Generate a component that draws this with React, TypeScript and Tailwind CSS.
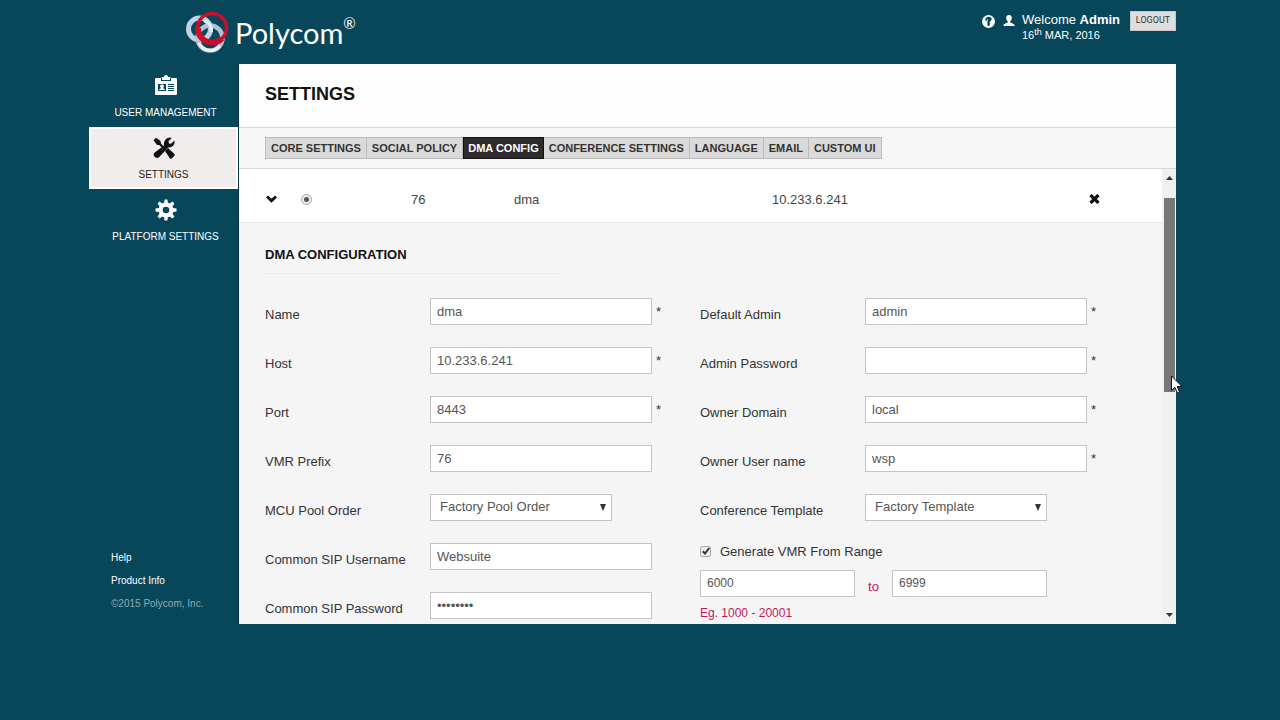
import { useState } from "react";
import type { ReactNode } from "react";

const tabs = [
  "CORE SETTINGS",
  "SOCIAL POLICY",
  "DMA CONFIG",
  "CONFERENCE SETTINGS",
  "LANGUAGE",
  "EMAIL",
  "CUSTOM UI",
];

const inputClass = "h-[27px] border border-[#c4c4c4] bg-white px-[6px] text-[#555] outline-none";

function Logo() {
  return (
    <a href="#" className="flex items-center" aria-label="Polycom home">
      <svg width="46" height="44" viewBox="0 0 46 44" fill="none">
        <circle cx="14.500" cy="18" r="11" stroke="#c3d3e6" strokeWidth="5" />
        <circle cx="25" cy="27" r="12.500" stroke="#b4c2d6" strokeWidth="4.500" />
        <path d="M14 32a12.500 12.500 0 0 0 21 3" stroke="#eef3f8" strokeWidth="3" />
        <circle cx="27" cy="17" r="14.500" stroke="#c8102e" strokeWidth="3.500" />
        <path d="M13 17c0 8 6 14.500 14 14.500 4 0 7-1 10-4" stroke="#c8102e" strokeWidth="6" />
        <path d="M19.500 10c4.500 1.500 7.500 5 7 11" stroke="#e6eef6" strokeWidth="3" />
      </svg>
      <span className="flex items-start pl-1 font-['Lato',sans-serif] text-[29px] leading-9 text-white">
        Polycom
        <span className="text-[15px] leading-4">®</span>
      </span>
    </a>
  );
}

function BadgeIcon() {
  return (
    <svg width="22" height="20" viewBox="0 0 22 20">
      <path fill="#fff" d="M1 3h5.500V2H9a2 2 0 0 1 4 0h2.500v1H21a1 1 0 0 1 1 1v15a1 1 0 0 1-1 1H1a1 1 0 0 1-1-1V4a1 1 0 0 1 1-1z" />
      <path fill="#08465a" d="M6 3h1v2h8V3h1v3H6zM3 9h8v7H3zM13 9h6v1h-6zM13 11h6v1h-6zM13 13h6v1h-6zM13 15h6v1h-6z" />
      <path fill="#fff" d="M7 9.500a1.700 1.700 0 0 1 1 3.200c0 .8 2 .8 2 2.300H4c0-1.500 2-1.500 2-2.300a1.700 1.700 0 0 1 1-3.200z" />
    </svg>
  );
}

function ToolsIcon() {
  return (
    <svg width="22" height="22" viewBox="0 0 22 22">
      <path fill="#111" d="M.5 3.200L3 .8 7.500 4l.6 2.700 3.200 3.200-1.600 1.600-3.200-3.200-2.700-.6z" />
      <path fill="#111" d="M12 14l3-3 6.200 5.800c.7.700.7 1.500 0 2.200l-2.200 2.200c-.7.700-1.500.7-2.200 0z" />
      <path
        fill="#111"
        d="M11 8.500c-.6-4 2-8 6-8l1.800.4-3.300 3.300.4 2.200 2.200.4 3.300-3.200c1 4-2.200 7.400-6.200 6.900L6 20.300c-1 1-2.700 1-3.800 0l-.8-.8c-1-1.100-1-2.700 0-3.800z"
      />
    </svg>
  );
}

function GearIcon() {
  return (
    <svg width="22" height="22" viewBox="0 0 22 22">
      <g fill="#fff">
        {[0, 45, 90, 135].map((angle) => (
          <path key={angle} transform={`rotate(${angle} 11 11)`} d="M9.600 .5h2.800l.8 5v11l-.8 5H9.600l-.8-5v-11z" />
        ))}
        <circle cx="11" cy="11" r="7.500" />
      </g>
      <circle cx="11" cy="11" r="3.300" fill="#08465a" />
    </svg>
  );
}

function NavItem({ icon, label, active }: { icon: ReactNode; label: string; active?: boolean }) {
  return (
    <a
      href="#"
      className={
        active
          ? "flex h-[62px] flex-col items-center justify-between border-2 border-white bg-[#f1edec] pt-2 pb-1 text-[10px] leading-4 text-[#222]"
          : "flex h-[62px] flex-col items-center justify-between pt-[10px] pb-[6px] pl-1 text-[10px] leading-4 text-white"
      }
    >
      {icon}
      <span>{label}</span>
    </a>
  );
}

type FieldProps = { id: string; label: string; value: string; required?: boolean; type?: string };

function Field({ id, label, value, required, type = "text" }: FieldProps) {
  return (
    <div className="flex h-[49px] items-start">
      <label htmlFor={id} className="w-[165px] shrink-0 pt-[7px] leading-5">
        {label}
      </label>
      <input id={id} type={type} defaultValue={value} className={`${inputClass} w-[222px]`} />
      {required && <span className="pl-1 leading-7">*</span>}
    </div>
  );
}

function SelectField({ id, label, value }: { id: string; label: string; value: string }) {
  return (
    <div className="flex h-[49px] items-start">
      <label htmlFor={id} className="w-[165px] shrink-0 pt-[7px] leading-5">
        {label}
      </label>
      <div className="relative">
        <select
          id={id}
          defaultValue={value}
          className="h-[27px] w-[182px] appearance-none border border-[#c4c4c4] bg-white px-[9px] text-[#555] outline-none"
        >
          <option>{value}</option>
        </select>
        <svg className="pointer-events-none absolute top-[10px] right-[6px]" width="6" height="7" viewBox="0 0 6 7">
          <path fill="#333" d="M0 0h6L3 7z" />
        </svg>
      </div>
    </div>
  );
}

function DmaTable() {
  return (
    <table className="w-full table-fixed border-b border-[#e6e6e6] bg-white text-[13px] text-[#444]">
      <colgroup>
        <col className="w-[57px]" />
        <col className="w-[115px]" />
        <col className="w-[103px]" />
        <col className="w-[258px]" />
        <col />
        <col className="w-[73px]" />
      </colgroup>
      <tbody>
        <tr className="h-[53px]">
          <td className="pt-2 pl-[27px]">
            <button aria-label="Collapse" className="block">
              <svg width="11" height="8" viewBox="0 0 11 8">
                <path fill="none" stroke="#111" strokeWidth="3" d="M1 1.500l4.500 4.300L10 1.500" />
              </svg>
            </button>
          </td>
          <td className="pt-2 pl-1">
            <input
              type="radio"
              name="dma"
              defaultChecked
              aria-label="Select dma"
              className="m-px block size-[11px] appearance-none rounded-full border border-[#aaa] bg-[#eee] checked:bg-[radial-gradient(circle,#555_0,#555_2px,#eee_3px)]"
            />
          </td>
          <td className="pt-2">76</td>
          <td className="pt-2">dma</td>
          <td className="pt-2">10.233.6.241</td>
          <td className="pt-2">
            <button aria-label="Delete" className="block">
              <svg width="11" height="10" viewBox="0 0 11 10">
                <path fill="none" stroke="#111" strokeWidth="3.200" d="M1.500 1l8 8M9.500 1l-8 8" />
              </svg>
            </button>
          </td>
        </tr>
      </tbody>
    </table>
  );
}

function Scrollbar() {
  return (
    <div className="relative flex w-[14px] shrink-0 flex-col items-center bg-[#f0f0f0] pt-[7px] pb-[7px]">
      <svg width="7" height="4" viewBox="0 0 7 4">
        <path fill="#333" d="M0 4h7L3.500 0z" />
      </svg>
      <div className="mt-[18px] h-[194px] w-[11px] bg-[#777]" />
      <svg className="mt-auto" width="7" height="4" viewBox="0 0 7 4">
        <path fill="#333" d="M0 0h7L3.500 4z" />
      </svg>
      <svg className="absolute top-[206px] left-[9px]" width="12" height="20" viewBox="0 0 12 20">
        <path fill="#fff" stroke="#111" d="M.5 1v14.500l3.400-3.200 2.400 5.900 2.300-1-2.400-5.700h4.800z" />
      </svg>
    </div>
  );
}

export default function App() {
  const [activeTab, setActiveTab] = useState("DMA CONFIG");

  return (
    <div className="flex h-screen flex-col bg-[#08465a] pr-[104px] pb-24 pl-[89px] font-['Liberation_Sans',Arial,sans-serif]">
      <header className="flex h-16 shrink-0 items-start justify-between pt-[11px] pl-24">
        <Logo />
        <div className="flex items-start text-white">
          <a href="#" aria-label="Help" className="pt-1">
            <svg width="13" height="13" viewBox="0 0 12 12">
              <circle cx="6" cy="6" r="6" fill="#fff" />
              <path fill="#08465a" d="M6 1.700c2 0 3 1 3 2.300C9 5.300 7.200 5.500 7.200 6.500V10H5V5.300h.6V4.200H4.500v1H3C3 3 4 1.700 6 1.700z" />
            </svg>
          </a>
          <svg className="mt-1 ml-2" width="12" height="12" viewBox="0 0 11 12">
            <path fill="#fff" d="M5.500 0C7.300 0 8.300 1.300 8.300 3S7.500 5.500 6.800 6.300c-.3 1 .2 1.400 1.200 1.800 1.500.6 3 1 3 2.400v.5H0v-.5c0-1.400 1.500-1.800 3-2.400 1-.4 1.500-.8 1.200-1.800C3.500 5.500 2.700 4.700 2.700 3s1-3 2.800-3z" />
          </svg>
          <div className="w-[115px] pt-px pl-[7px]">
            <p className="text-[13px] leading-4">
              Welcome <strong>Admin</strong>
            </p>
            <p className="text-[11px] leading-[14px]">
              16<sup className="text-[9px] leading-none">th</sup> MAR, 2016
            </p>
          </div>
          <button className="h-5 w-[46px] border border-[#c9c9c9] bg-[#dedede] font-['Roboto',sans-serif] text-[9px] text-[#333]">
            LOGOUT
          </button>
        </div>
      </header>

      <div className="flex min-h-0 flex-1">
        <aside className="flex w-[149px] shrink-0 flex-col">
          <nav className="pt-px">
            <NavItem icon={<BadgeIcon />} label="USER MANAGEMENT" />
            <NavItem icon={<ToolsIcon />} label="SETTINGS" active />
            <NavItem icon={<GearIcon />} label="PLATFORM SETTINGS" />
          </nav>
          <ul className="mt-auto pb-3 pl-[22px] text-[10px] leading-4 text-white">
            <li className="mb-[7px]">
              <a href="#">Help</a>
            </li>
            <li className="mb-[7px]">
              <a href="#">Product Info</a>
            </li>
            <li className="text-[#8fa9b8]">©2015 Polycom, Inc.</li>
          </ul>
        </aside>

        <main className="flex min-w-0 flex-1 flex-col border-l border-[#083243] bg-[#f5f5f5]">
          <h1 className="h-[63px] shrink-0 bg-[#fdfdfd] pl-[26px] text-[18px] leading-[61px] font-bold text-[#111]">
            SETTINGS
          </h1>
          <div className="flex h-[42px] shrink-0 items-center border-y border-[#d9d9d9] bg-[#f7f7f7] pl-[26px]">
            <div className="flex border-l border-[#bbb]">
              {tabs.map((tab) => (
                <button
                  key={tab}
                  onClick={() => setActiveTab(tab)}
                  className={
                    tab === activeTab
                      ? "h-[22px] border border-[#111] bg-[#2d2b2d] px-1 text-[11px] font-bold text-white"
                      : "h-[22px] border-y border-r border-[#bbb] bg-[#dadada] px-[5px] text-[11px] font-bold text-[#333]"
                  }
                >
                  {tab}
                </button>
              ))}
            </div>
          </div>

          <div className="flex min-h-0 flex-1">
            <div className="min-w-0 flex-1 overflow-hidden">
              <DmaTable />
              <form className="pr-[27px] pl-[26px] text-[13px] text-[#333]">
                <h2 className="mb-6 w-[295px] border-b border-[#ececec] pt-[22px] pb-2 leading-5 font-bold text-[#111]">
                  DMA CONFIGURATION
                </h2>
                <div className="grid grid-cols-2">
                  <div>
                    <Field id="name" label="Name" value="dma" required />
                    <Field id="host" label="Host" value="10.233.6.241" required />
                    <Field id="port" label="Port" value="8443" required />
                    <Field id="prefix" label="VMR Prefix" value="76" />
                    <SelectField id="pool" label="MCU Pool Order" value="Factory Pool Order" />
                    <Field id="sip-user" label="Common SIP Username" value="Websuite" />
                    <Field id="sip-pass" label="Common SIP Password" value="password" type="password" />
                  </div>
                  <div>
                    <Field id="admin" label="Default Admin" value="admin" required />
                    <Field id="admin-pass" label="Admin Password" value="" type="password" required />
                    <Field id="domain" label="Owner Domain" value="local" required />
                    <Field id="owner" label="Owner User name" value="wsp" required />
                    <SelectField id="template" label="Conference Template" value="Factory Template" />
                    <label className="flex h-[18px] items-center gap-[9px]">
                      <span className="relative flex">
                        <input
                          type="checkbox"
                          defaultChecked
                          className="peer size-[11px] appearance-none rounded-[2px] border border-[#aaa] bg-[#eee]"
                        />
                        <svg
                          className="pointer-events-none invisible absolute top-[1px] left-[2px] peer-checked:visible"
                          width="8"
                          height="8"
                          viewBox="0 0 8 8"
                        >
                          <path fill="none" stroke="#333" strokeWidth="2" d="M.8 4.200l2.200 2.300L7.200 1" />
                        </svg>
                      </span>
                      Generate VMR From Range
                    </label>
                    <div className="mt-[9px] flex text-[#c2185b]">
                      <input aria-label="Range start" defaultValue="6000" className={`${inputClass} w-[155px] text-[12px]`} />
                      <span className="w-[37px] pt-[7px] text-center leading-5">to</span>
                      <input aria-label="Range end" defaultValue="6999" className={`${inputClass} w-[155px] text-[12px]`} />
                    </div>
                    <p className="mt-[6px] text-[12px] leading-5 text-[#c2185b]">Eg. 1000 - 20001</p>
                  </div>
                </div>
              </form>
            </div>
            <Scrollbar />
          </div>
        </main>
      </div>
    </div>
  );
}
